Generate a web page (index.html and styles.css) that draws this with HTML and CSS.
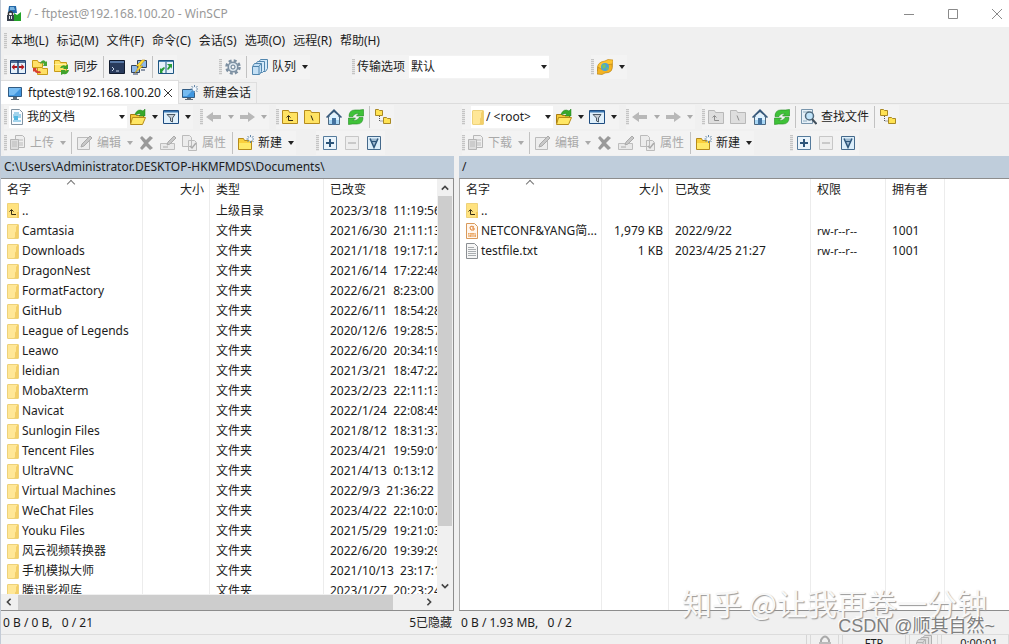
FILE: index.html
```html
<!DOCTYPE html>
<html lang="zh-CN">
<head>
<meta charset="utf-8">
<title>/ - ftptest@192.168.100.20 - WinSCP</title>
<link rel="stylesheet" href="styles.css">
</head>
<body>
<svg class="sprite" aria-hidden="true">
  <symbol id="app" viewBox="0 0 16 16"><path d="M3 0h7l1 7H2z" fill="#2468a8"/><path d="M4 1h4l1 3H4z" fill="#79b4e0"/><path d="M8 7l3 2 4-3v9H8z" fill="#23a329"/><path d="M2.500 9V7q2-3 4 0v2" fill="none" stroke="#333" stroke-width="1.500"/><path d="M1 9h7v6H1z" fill="#39414d"/><path d="M3 10h1v3H3zm2 0h1v3H5z" fill="#e4e7ec"/></symbol>
  <symbol id="compare" viewBox="0 0 16 16"><path d="M.5 1.500h15v13H.5z" fill="#e5f1fb" stroke="#1f4173"/><path d="M1 3h14M8 1v14" stroke="#1f4173" stroke-width="1.500"/><path d="M1.500 8l3-3v2H7v2H4.500v2zM14.500 8l-3-3v2H9v2h2.500v2z" fill="#b3171b"/></symbol>
  <symbol id="syncdirs" viewBox="0 0 16 16"><path d="M.5 1.500h5l1 2h4v5H.5zM5.500 8.500h4l1 1h5v6h-10z" fill="#ffe066" stroke="#c89b18"/><path d="M8 4q3-5 6-1l1-1v5h-4l1-2q-2-2-3 0z" fill="#49a536"/><path d="M1 9h4l-1 1q1 3 4 2l1 2q-5 1-7-2l-1 1z" fill="#d8402f"/></symbol>
  <symbol id="sync" viewBox="0 0 16 16"><path d="M.5 1.500h5l1 2h6v9H.5z" fill="#ffe263" stroke="#c89b18"/><path d="M.5 5.500h12" stroke="#fff1a0"/><path d="M6 9q2-4 6-2l2-2v5H9l1-1q-1-1-2 0zM15 11q-1 5-6 4l-2 1v-5h5l-1 1q1 1 2-1z" fill="#3fa22c"/></symbol>
  <symbol id="terminal" viewBox="0 0 16 16"><path d="M.5 1.500h15v13H.5z" fill="#293b5c" stroke="#111b2e"/><path d="M1 2h14v2H1z" fill="#5878a5"/><path d="M3 8l2 2-2 2M7 12h3" fill="none" stroke="#c9d6e8"/></symbol>
  <symbol id="putty" viewBox="0 0 16 16"><path d="M6.500 1.500h9v7h-9zM.5 6.500h8v7h-8z" fill="#8db8ea" stroke="#35465e"/><path d="M10 10h4v2h-4zM2 14h5v2H2z" fill="#8c97a8"/><path d="M11 1L5 7h3l-4 7 8-7H9l5-6z" fill="#ffdf39" stroke="#b58b12" stroke-width=".6"/></symbol>
  <symbol id="newwin" viewBox="0 0 16 16"><path d="M.5 1.500h15v13H.5z" fill="#e7f2fb" stroke="#1d5581"/><path d="M1 2h14v1H1z" fill="#4b86b4"/><path d="M8 3v12" stroke="#1d5581"/><path d="M9 5h5v5l-1-2-3 3-1-1 2-3zM2 9l1 1 3-2 1 1-3 4 1 1H2z" fill="#279c39"/></symbol>
  <symbol id="gear" viewBox="0 0 16 16"><circle cx="8" cy="8" r="6.500" fill="none" stroke="#7d90a2" stroke-width="2.500" stroke-dasharray="2.900 2.200"/><circle cx="8" cy="8" r="4.800" fill="#dbe5ed" stroke="#7d90a2" stroke-width="1.500"/><circle cx="8" cy="8" r="2" fill="#f5f5f5" stroke="#62798f"/></symbol>
  <symbol id="queue" viewBox="0 0 16 16"><path d="M6.500 3.500l2-3h7v9l-2 3h-7z" fill="#d5eafa" stroke="#5286ae"/><path d="M3.500 5.500l2-3h7v9l-2 2h-7z" fill="#d5eafa" stroke="#5286ae"/><path d="M.5 7.500l2-3h7v8l-2 3h-7z" fill="#c4e0f5" stroke="#5286ae"/><path d="M1 7.500h6v8M7 7.500l2-3" fill="none" stroke="#5286ae"/></symbol>
  <symbol id="auto" viewBox="0 0 16 16"><path d="M.5 12Q-1 3 8 2l3-1.500 5 .5-1 7-3-2q-5-1-7 4z" fill="#ffc52f" stroke="#c58b19" stroke-width=".7"/><path d="M15 5q2 9-7 9l-3 1.500-5-.5 1-7 3 2q5 2 6-4z" fill="#f4b321" stroke="#b9861e" stroke-width=".7"/><circle cx="8" cy="8" r="4" fill="#4ba3d8"/><path d="M5 6l3-1 1 3-3 2zM9 9l3-1-2 3z" fill="#78c464"/></symbol>
  <symbol id="monitor" viewBox="0 0 16 16"><path d="M1.500 2.500h13v9h-13z" fill="#4095df" stroke="#315b82"/><path d="M2 3h12l-7 7H2z" fill="#78bdf3"/><path d="M6 12h4v2h2v1H4v-1h2z" fill="#5f6c79"/></symbol>
  <symbol id="newsession" viewBox="0 0 16 16"><path d="M.5 4.500h12v8H.5z" fill="#3f96df" stroke="#315b82"/><path d="M1 5h10l-6 6H1z" fill="#75bbf1"/><path d="M5 13h4v1h2v1H3v-1h2z" fill="#5f6c79"/><path d="M12.500 0v8M8.500 4h8M9.500 1l6 6M15.500 1l-6 6" stroke="#6387aa"/><circle cx="12.500" cy="4" r="2" fill="#f3f9ff"/></symbol>
  <symbol id="docs" viewBox="0 0 16 16"><path d="M2.500.5h8l3 3v12h-11z" fill="#fafcff" stroke="#8193a2"/><path d="M5 4h5M4 6h8M4 8h8M4 12h8" stroke="#4aaad8"/><path d="M5 7h4v4H5z" fill="#53b8e1"/></symbol>
  <symbol id="open" viewBox="0 0 16 16"><path d="M.5 14.500v-9h5l1 1h7v3" fill="#f5c937" stroke="#a97c13"/><path d="M.5 15.500l2-7h13l-3 7z" fill="#ffe765" stroke="#b58b19"/><path d="M5 5q3-6 8-3l2-2v7H9l2-2q-3-1-5 1z" fill="#37a82b" stroke="#1f7e1c" stroke-width=".5"/></symbol>
  <symbol id="filter" viewBox="0 0 16 16"><path d="M.5 1.500h15v13H.5z" fill="#e0f0fb" stroke="#1e4c80"/><path d="M1 2h14v1.500H1z" fill="#3976b1"/><path d="M4 5.500h8L9.500 9v4l-2-1V9z" fill="#c6ced5" stroke="#4b5864"/></symbol>
  <symbol id="back" viewBox="0 0 16 16"><path d="M0 8l7-5v3h8v4H7v3z" fill="#b8b8b8"/></symbol>
  <symbol id="forward" viewBox="0 0 16 16"><path d="M16 8L9 3v3H1v4h8v3z" fill="#b8b8b8"/></symbol>
  <symbol id="parent" viewBox="0 0 16 16"><path d="M.5 14.500v-13h6l1 2h8v11z" fill="#ffe363" stroke="#b58b1c"/><path d="M6.500 7v4.500H11M4.500 8.500l2-2 2 2" fill="none" stroke="#332b16"/></symbol>
  <symbol id="root" viewBox="0 0 16 16"><path d="M.5 14.500v-13h6l1 2h8v11z" fill="#ffe363" stroke="#b58b1c"/><path d="M7 6.500l2 5" stroke="#332b16"/></symbol>
  <symbol id="home" viewBox="0 0 16 16"><path d="M2.500 7.500h11v8h-11z" fill="#a9d7f5" stroke="#4e6980"/><path d="M0 8l8-8 8 8-1 1-7-6-7 6z" fill="#36597c"/><path d="M3 8l5-4 5 4v3H3z" fill="#dff2ff"/><path d="M6 9h4v7H6z" fill="#4473a0"/></symbol>
  <symbol id="refresh" viewBox="0 0 16 16"><path d="M1 7.500Q1 1 7 1h4.500L15.500.5V7H8.500l2.500-2.500Q6 4 5 7.500zM15 8.500Q15 15 9 15H4.500L.5 15.500V9h7L5 11.500q5 .5 6-3z" fill="#3fc238" stroke="#218b20" stroke-width=".6"/></symbol>
  <symbol id="tree" viewBox="0 0 16 16"><path d="M.5.5h3l1 1h3v5h-7zM8.500 8.500h3l1 1h3v5h-7z" fill="#ffe353" stroke="#a98924"/><path d="M4.500 7v5H8" fill="none" stroke="#555" stroke-dasharray="1 1"/></symbol>
  <symbol id="find" viewBox="0 0 16 16"><path d="M.5.5h11v14H.5z" fill="#e5f0f8" stroke="#7895ac"/><path d="M2 3h6M2 12h4" stroke="#8dacbf"/><circle cx="8.500" cy="7" r="4" fill="#c0e4fa" stroke="#506a7d" stroke-width="1.500"/><path d="M11 10l4.500 5" stroke="#42505c" stroke-width="2"/></symbol>
  <symbol id="transfer" viewBox="0 0 16 16"><path d="M5.500.5h7l2 2v10h-9z" fill="#eee" stroke="#b7b7b7"/><path d="M.5 4.500h8v10h-8z" fill="#ddd" stroke="#b5b5b5"/><path d="M2 7h5M2 9h5M2 11h5M8 5h5M9 8h4M9 10h4" stroke="#bbb"/></symbol>
  <symbol id="edit" viewBox="0 0 16 16"><path d="M.5 2.500h12v12H.5z" fill="#ededed" stroke="#bbb"/><path d="M4 12l1-3 8-8 2 2-8 8z" fill="#c8c8c8" stroke="#aaa"/></symbol>
  <symbol id="delete" viewBox="0 0 16 16"><path d="M2 3l2-2 4 4 4-4 3 2-5 5 5 5-3 2-4-4-4 4-2-2 4-5z" fill="#9a9a9a"/></symbol>
  <symbol id="rename" viewBox="0 0 16 16"><path d="M.5 8.500h14v6H.5z" fill="#e9e9e9" stroke="#bdbdbd"/><path d="M3 12h5M7 10l1-3 6-6 2 2-6 6z" fill="#c8c8c8" stroke="#aaa"/></symbol>
  <symbol id="props" viewBox="0 0 16 16"><path d="M.5.5h7l2 2v9h-9zM6.500 5.500h6l2 2v8h-8z" fill="#ececec" stroke="#bbb"/><path d="M8 11l2 2 4-5" fill="none" stroke="#aaa" stroke-width="1.500"/></symbol>
  <symbol id="newdir" viewBox="0 0 16 16"><path d="M.5 14.500v-11h5l1 2h7v9z" fill="#f9cf3d" stroke="#b58b1c"/><path d="M1 8h12v6H1z" fill="#ffe969"/><path d="M12.500 0v8M8.500 4h8M9.500 1l6 6M15.500 1l-6 6" stroke="#6387aa"/><circle cx="12.500" cy="4" r="2" fill="#f3f9ff"/></symbol>
  <symbol id="plus" viewBox="0 0 16 16"><path d="M1.500 1.500h13v13h-13z" fill="#eaf4fb" stroke="#557b9c"/><path d="M4 8h8M8 4v8" stroke="#2c557a" stroke-width="2"/></symbol>
  <symbol id="minus" viewBox="0 0 16 16"><path d="M1.500 1.500h13v13h-13z" fill="#eee" stroke="#c7c7c7"/><path d="M4 8h8" stroke="#bcbcbc" stroke-width="1.500"/></symbol>
  <symbol id="invert" viewBox="0 0 16 16"><path d="M1.500 1.500h13v13h-13z" fill="#dceefa" stroke="#44698b"/><path d="M4 3.500l4 9 4-9" fill="#9db9d0" stroke="#2c557a" stroke-width="1.500"/><path d="M5.500 6.500h5" stroke="#2c557a"/></symbol>
  <symbol id="lock" viewBox="0 0 16 16"><path d="M4 8V5q4-7 8 0v3" fill="none" stroke="#aaa" stroke-width="2"/><path d="M2 7h12v8H2z" fill="#bbb"/></symbol>
  <symbol id="updir" viewBox="0 0 12 16"><path d="M.5.5h11v14H.5z" fill="#ffe27f" stroke="#eed27a"/><path d="M10 9h2v6h-2z" fill="#f0c75c"/><path d="M4.500 7v4.500H9M2.500 8.500l2-2 2 2" fill="none" stroke="#3a3018"/></symbol>
  <symbol id="pdf" viewBox="0 0 12 16"><path d="M.5.5h8l3 3v12H.5z" fill="#fff6ed" stroke="#d99a5b"/><path d="M8 4q-4-2-4 1t4 2V5H6" fill="none" stroke="#e08130"/><path d="M2 10h8v4H2z" fill="#eda965"/><path d="M3 14v-3h1v1M6 11v3M8 14v-3h2" fill="none" stroke="#fff" stroke-width=".6"/></symbol>
  <symbol id="text" viewBox="0 0 12 16"><path d="M.5.5h8l3 3v12H.5z" fill="#f6f6f6" stroke="#8b8f93"/><path d="M2 4.500h6M2 6.500h8M2 8.500h8M2 10.500h8M2 12.500h8" stroke="#a9adb0"/></symbol>
</svg>

<div class="app">
  <header class="titlebar">
    <svg class="icon"><use href="#app"/></svg>
    <h1>/ - ftptest@192.168.100.20 - WinSCP</h1>
    <div class="window-buttons">
      <button aria-label="最小化"><svg class="wicon" viewBox="0 0 12 12"><path d="M1 6.500h10"/></svg></button>
      <button aria-label="最大化"><svg class="wicon" viewBox="0 0 12 12"><path d="M1.500 1.500h9v9h-9z"/></svg></button>
      <button aria-label="关闭"><svg class="wicon" viewBox="0 0 12 12"><path d="M1 1l10 10M11 1L1 11"/></svg></button>
    </div>
  </header>

  <nav class="menubar">
    <span class="grip"></span>
    <button>本地(L)</button><button>标记(M)</button><button>文件(F)</button><button>命令(C)</button><button>会话(S)</button><button>选项(O)</button><button>远程(R)</button><button>帮助(H)</button>
  </nav>

  <div class="toolbar main-tools">
    <div class="group">
      <span class="grip"></span>
      <button aria-label="比较目录"><svg class="icon"><use href="#compare"/></svg></button>
      <button aria-label="同步浏览"><svg class="icon"><use href="#syncdirs"/></svg></button>
      <button><svg class="icon"><use href="#sync"/></svg>同步</button>
      <span class="sep"></span>
      <button aria-label="终端"><svg class="icon"><use href="#terminal"/></svg></button>
      <button aria-label="PuTTY"><svg class="icon"><use href="#putty"/></svg></button>
      <span class="sep"></span>
      <button aria-label="新窗口"><svg class="icon"><use href="#newwin"/></svg></button>
    </div>
    <div class="group">
      <span class="grip"></span>
      <button aria-label="选项"><svg class="icon"><use href="#gear"/></svg></button>
      <span class="sep"></span>
      <button><svg class="icon"><use href="#queue"/></svg>队列</button><button class="caret" aria-label="队列菜单"></button>
    </div>
    <div class="group">
      <span class="grip"></span>
      <label for="preset">传输选项</label>
      <div class="combo preset"><select id="preset"><option>默认</option></select><span class="caret"></span></div>
    </div>
    <div class="group last">
      <span class="grip"></span>
      <button aria-label="自动"><svg class="icon"><use href="#auto"/></svg></button><button class="caret" aria-label="自动菜单"></button>
    </div>
  </div>

  <div class="tabs">
    <button class="tab active"><svg class="icon"><use href="#monitor"/></svg>ftptest@192.168.100.20<svg class="close" viewBox="0 0 8 8"><path d="M0 0l8 8M8 0L0 8"/></svg></button>
    <button class="tab"><svg class="icon"><use href="#newsession"/></svg>新建会话</button>
  </div>

  <main class="panes">
    <section class="pane local">
      <div class="toolbar">
        <div class="group">
          <span class="grip"></span>
          <div class="combo drive"><svg class="icon"><use href="#docs"/></svg><select aria-label="本地目录"><option>我的文档</option></select><span class="caret"></span></div>
          <button aria-label="打开目录"><svg class="icon"><use href="#open"/></svg></button><button class="caret" aria-label="打开菜单"></button>
          <button aria-label="过滤"><svg class="icon"><use href="#filter"/></svg></button><button class="caret" aria-label="过滤菜单"></button>
        </div>
        <div class="group near">
          <span class="grip"></span>
          <button disabled aria-label="后退"><svg class="icon"><use href="#back"/></svg></button><button class="caret" disabled aria-label="后退菜单"></button>
          <button disabled aria-label="前进"><svg class="icon"><use href="#forward"/></svg></button><button class="caret" disabled aria-label="前进菜单"></button>
        </div>
        <div class="group near">
          <span class="grip"></span>
          <button aria-label="上级目录"><svg class="icon"><use href="#parent"/></svg></button>
          <button aria-label="根目录"><svg class="icon"><use href="#root"/></svg></button>
          <button aria-label="主目录"><svg class="icon"><use href="#home"/></svg></button>
          <button aria-label="刷新"><svg class="icon"><use href="#refresh"/></svg></button>
          <span class="sep"></span>
          <button aria-label="目录树"><svg class="icon"><use href="#tree"/></svg></button>
        </div>
      </div>
      <div class="toolbar file-tools">
        <div class="group">
          <span class="grip"></span>
          <button disabled><svg class="icon"><use href="#transfer"/></svg>上传</button><button class="caret" disabled aria-label="上传菜单"></button>
          <span class="sep"></span>
          <button disabled><svg class="icon"><use href="#edit"/></svg>编辑</button><button class="caret" disabled aria-label="编辑菜单"></button>
          <button disabled aria-label="删除"><svg class="icon"><use href="#delete"/></svg></button>
          <button disabled aria-label="重命名"><svg class="icon"><use href="#rename"/></svg></button>
          <button disabled><svg class="icon"><use href="#props"/></svg>属性</button>
          <span class="sep"></span>
          <button><svg class="icon"><use href="#newdir"/></svg>新建</button><button class="caret" aria-label="新建菜单"></button>
        </div>
        <div class="group select-tools">
          <span class="grip"></span>
          <button aria-label="选择"><svg class="icon"><use href="#plus"/></svg></button>
          <button disabled aria-label="取消选择"><svg class="icon"><use href="#minus"/></svg></button>
          <button aria-label="反选"><svg class="icon"><use href="#invert"/></svg></button>
        </div>
      </div>
      <div class="path">C:\Users\Administrator.DESKTOP-HKMFMDS\Documents\</div>
      <div class="listing">
        <div class="scroll-y"><svg viewBox="0 0 10 6"><path d="M1 5l4-4 4 4"/></svg><span class="thumb"></span><svg viewBox="0 0 10 6"><path d="M1 1l4 4 4-4"/></svg></div>
        <div class="files">
          <table>
            <colgroup><col class="c-name"><col class="c-size"><col class="c-type"><col></colgroup>
            <thead><tr><th class="sorted">名字</th><th class="num">大小</th><th>类型</th><th>已改变</th></tr></thead>
            <tbody>
              <tr><td><svg class="ficon"><use href="#updir"/></svg>..</td><td></td><td>上级目录</td><td>2023/3/18&nbsp; 11:19:56</td></tr>
              <tr><td class="dir">Camtasia</td><td></td><td>文件夹</td><td>2021/6/30&nbsp; 21:11:13</td></tr>
              <tr><td class="dir">Downloads</td><td></td><td>文件夹</td><td>2021/1/18&nbsp; 19:17:12</td></tr>
              <tr><td class="dir">DragonNest</td><td></td><td>文件夹</td><td>2021/6/14&nbsp; 17:22:48</td></tr>
              <tr><td class="dir">FormatFactory</td><td></td><td>文件夹</td><td>2022/6/21&nbsp; 8:23:00</td></tr>
              <tr><td class="dir">GitHub</td><td></td><td>文件夹</td><td>2022/6/11&nbsp; 18:54:28</td></tr>
              <tr><td class="dir">League of Legends</td><td></td><td>文件夹</td><td>2020/12/6&nbsp; 19:28:57</td></tr>
              <tr><td class="dir">Leawo</td><td></td><td>文件夹</td><td>2022/6/20&nbsp; 20:34:19</td></tr>
              <tr><td class="dir">leidian</td><td></td><td>文件夹</td><td>2021/3/21&nbsp; 18:47:22</td></tr>
              <tr><td class="dir">MobaXterm</td><td></td><td>文件夹</td><td>2023/2/23&nbsp; 22:11:13</td></tr>
              <tr><td class="dir">Navicat</td><td></td><td>文件夹</td><td>2022/1/24&nbsp; 22:08:45</td></tr>
              <tr><td class="dir">Sunlogin Files</td><td></td><td>文件夹</td><td>2021/8/12&nbsp; 18:31:37</td></tr>
              <tr><td class="dir">Tencent Files</td><td></td><td>文件夹</td><td>2023/4/21&nbsp; 19:59:01</td></tr>
              <tr><td class="dir">UltraVNC</td><td></td><td>文件夹</td><td>2021/4/13&nbsp; 0:13:12</td></tr>
              <tr><td class="dir">Virtual Machines</td><td></td><td>文件夹</td><td>2022/9/3&nbsp; 21:36:22</td></tr>
              <tr><td class="dir">WeChat Files</td><td></td><td>文件夹</td><td>2023/4/22&nbsp; 22:10:07</td></tr>
              <tr><td class="dir">Youku Files</td><td></td><td>文件夹</td><td>2021/5/29&nbsp; 19:21:03</td></tr>
              <tr><td class="dir">风云视频转换器</td><td></td><td>文件夹</td><td>2022/6/20&nbsp; 19:39:29</td></tr>
              <tr><td class="dir">手机模拟大师</td><td></td><td>文件夹</td><td>2021/10/13&nbsp; 23:17:15</td></tr>
              <tr><td class="dir">腾讯影视库</td><td></td><td>文件夹</td><td>2023/1/27&nbsp; 20:23:24</td></tr>
            </tbody>
          </table>
          <div class="lines"><i class="c-name"></i><i class="c-size"></i><i class="c-type"></i></div>
        </div>
        <div class="scroll-x"><svg viewBox="0 0 6 10"><path d="M5 1L1 5l4 4"/></svg><span class="thumb"></span><svg viewBox="0 0 6 10"><path d="M1 1l4 4-4 4"/></svg></div>
      </div>
      <div class="status"><span>0 B / 0 B,&nbsp;&nbsp; 0 / 21</span><span>5已隐藏</span></div>
    </section>

    <section class="pane remote">
      <div class="toolbar">
        <div class="group">
          <span class="grip"></span>
          <div class="combo drive"><span class="folder"></span><select aria-label="远程目录"><option>/ &lt;root&gt;</option></select><span class="caret"></span></div>
          <button aria-label="打开目录"><svg class="icon"><use href="#open"/></svg></button><button class="caret" aria-label="打开菜单"></button>
          <button aria-label="过滤"><svg class="icon"><use href="#filter"/></svg></button><button class="caret" aria-label="过滤菜单"></button>
        </div>
        <div class="group near">
          <span class="grip"></span>
          <button disabled aria-label="后退"><svg class="icon"><use href="#back"/></svg></button><button class="caret" disabled aria-label="后退菜单"></button>
          <button disabled aria-label="前进"><svg class="icon"><use href="#forward"/></svg></button><button class="caret" disabled aria-label="前进菜单"></button>
        </div>
        <div class="group near">
          <span class="grip"></span>
          <button disabled class="gray" aria-label="上级目录"><svg class="icon"><use href="#parent"/></svg></button>
          <button disabled class="gray" aria-label="根目录"><svg class="icon"><use href="#root"/></svg></button>
          <button aria-label="主目录"><svg class="icon"><use href="#home"/></svg></button>
          <button aria-label="刷新"><svg class="icon"><use href="#refresh"/></svg></button>
          <span class="sep"></span>
          <button><svg class="icon"><use href="#find"/></svg>查找文件</button>
          <span class="sep"></span>
          <button aria-label="目录树"><svg class="icon"><use href="#tree"/></svg></button>
        </div>
      </div>
      <div class="toolbar file-tools">
        <div class="group">
          <span class="grip"></span>
          <button disabled><svg class="icon"><use href="#transfer"/></svg>下载</button><button class="caret" disabled aria-label="下载菜单"></button>
          <span class="sep"></span>
          <button disabled><svg class="icon"><use href="#edit"/></svg>编辑</button><button class="caret" disabled aria-label="编辑菜单"></button>
          <button disabled aria-label="删除"><svg class="icon"><use href="#delete"/></svg></button>
          <button disabled aria-label="重命名"><svg class="icon"><use href="#rename"/></svg></button>
          <button disabled><svg class="icon"><use href="#props"/></svg>属性</button>
          <span class="sep"></span>
          <button><svg class="icon"><use href="#newdir"/></svg>新建</button><button class="caret" aria-label="新建菜单"></button>
        </div>
        <div class="group select-tools">
          <span class="grip"></span>
          <button aria-label="选择"><svg class="icon"><use href="#plus"/></svg></button>
          <button disabled aria-label="取消选择"><svg class="icon"><use href="#minus"/></svg></button>
          <button aria-label="反选"><svg class="icon"><use href="#invert"/></svg></button>
        </div>
      </div>
      <div class="path">/</div>
      <div class="listing">
        <div class="files">
          <table>
            <colgroup><col class="c-name"><col class="c-size"><col class="c-date"><col class="c-perm"><col class="c-owner"><col></colgroup>
            <thead><tr><th class="sorted">名字</th><th class="num">大小</th><th>已改变</th><th>权限</th><th>拥有者</th><th></th></tr></thead>
            <tbody>
              <tr><td><svg class="ficon"><use href="#updir"/></svg>..</td><td></td><td></td><td></td><td></td><td></td></tr>
              <tr><td><svg class="ficon"><use href="#pdf"/></svg>NETCONF&amp;YANG简...</td><td class="num">1,979 KB</td><td>2022/9/22</td><td class="perm">rw-r--r--</td><td>1001</td><td></td></tr>
              <tr><td><svg class="ficon"><use href="#text"/></svg>testfile.txt</td><td class="num">1 KB</td><td>2023/4/25 21:27</td><td class="perm">rw-r--r--</td><td>1001</td><td></td></tr>
            </tbody>
          </table>
          <div class="lines"><i class="c-name"></i><i class="c-size"></i><i class="c-date"></i><i class="c-perm"></i><i class="c-owner"></i></div>
        </div>
      </div>
      <div class="status"><span>0 B / 1.93 MB,&nbsp;&nbsp; 0 / 2</span></div>
    </section>
  </main>

  <footer class="session">
    <span class="hint"></span>
    <span class="cell"><svg class="icon"><use href="#lock"/></svg></span>
    <span class="cell wide">FTP</span>
    <span class="cell"><svg class="icon gray"><use href="#queue"/></svg></span>
    <span class="cell time">0:00:01</span>
  </footer>
</div>
<div class="mark mark-large">知乎 @让我再卷一分钟</div>
<div class="mark mark-small">CSDN @顺其自然~</div>
</body>
</html>
```
FILE: styles.css
```css
*, ::before, ::after { box-sizing: border-box; }

body {
  margin: 0;
  height: 100vh;
  overflow: hidden;
  position: relative;
  background: #f0f0f0;
  color: #1c1c1c;
  font: 12px/16px "Noto Sans", "Noto Sans CJK SC", sans-serif;
}

.sprite { display: none; }

button, select {
  margin: 0;
  padding: 0;
  border: 0;
  background: none;
  color: inherit;
  font: inherit;
  white-space: nowrap;
}

/* The session bar runs past the bottom edge of the window. */
.app {
  display: flex;
  flex-direction: column;
  height: calc(100vh + 11px);
  border-left: 1px solid #c3cbd6;
}

.icon { width: 16px; height: 16px; flex: none; display: block; }

/* Title bar */
.titlebar {
  display: flex;
  align-items: center;
  flex: none;
  height: 27px;
  padding-left: 5px;
  background: #fff;
}
.titlebar h1 {
  flex: 1;
  margin: 0 0 0 5px;
  font-size: 12px;
  font-weight: 400;
  color: #999;
}
.window-buttons { display: flex; }
.window-buttons button {
  width: 44px;
  height: 26px;
  display: flex;
  align-items: center;
  justify-content: center;
}
.window-buttons button:last-child { width: 34px; padding-left: 10px; }
.wicon { width: 12px; height: 12px; fill: none; stroke: #8a8a8a; }

/* Menu and toolbars */
.menubar {
  display: flex;
  align-items: center;
  flex: none;
  height: 27px;
  padding-left: 3px;
  gap: 8px;
}
.menubar .grip { margin-right: -4px; }

.grip {
  flex: none;
  width: 3px;
  height: 16px;
  background: repeating-linear-gradient(#c4c4c4 0 1px, #e6e6e6 1px 2px);
}

.toolbar {
  display: flex;
  align-items: center;
  flex: none;
  height: 26px;
  padding-left: 3px;
}
.group { display: flex; align-items: center; height: 24px; background: #f3f3f3; }
.group + .group { margin-left: 42px; }
.group + .near { margin-left: 7px; }
.group + .select-tools { margin-left: 20px; }
.remote .group + .select-tools { margin-left: 36px; }

.group button {
  display: flex;
  align-items: center;
  gap: 4px;
  height: 22px;
  padding: 0 3px;
}
.group button:disabled { color: #a9a9a9; }
.gray { filter: grayscale(1) brightness(0.9) opacity(0.5); }

.group .caret, .combo .caret {
  flex: none;
  display: flex;
  align-items: center;
  justify-content: center;
  width: 11px;
  padding: 0;
  height: 22px;
}
.caret::after {
  content: "";
  border: 3px solid transparent;
  border-top: 4px solid #222;
  border-bottom: 0;
}
.caret:disabled::after { border-top-color: #aaa; }

.sep { flex: none; width: 1px; height: 22px; margin: 0 2px; background: #c2c2c2; }
.file-tools .sep { margin-left: 3px; }

.group label { padding: 0 4px 0 2px; }
.combo { display: flex; align-items: center; height: 22px; background: #fff; }
.combo select { flex: 1; min-width: 0; appearance: none; outline: 0; padding-left: 2px; }
.preset { width: 140px; }
.local .drive { width: 118px; margin-left: 2px; }
.remote .drive { width: 82px; margin-left: 6px; }
.drive .folder { margin-left: 1px; }

.folder, .dir::before {
  content: "";
  flex: none;
  width: 12px;
  height: 15px;
  border: 1px solid #eed27a;
  border-radius: 1px;
  background: linear-gradient(100deg, #ffe797 70%, #f3cf69 72%);
}

/* Session tabs */
.tabs { display: flex; flex: none; height: 24px; border-bottom: 1px solid #dcdcdc; }
.tab {
  display: flex;
  align-items: center;
  gap: 5px;
  margin-top: 2px;
  padding: 0 5px 0 3px;
  border: 1px solid #dedede;
  border-left: 0;
  border-bottom: 0;
}
.tab.active { margin: 0 0 -1px; padding: 0 6px 0 6px; background: #fff; }
.tab.active .close { margin-left: -2px; }
.close { width: 8px; height: 8px; fill: none; stroke: #333; }

/* File panes */
.panes {
  flex: 1;
  min-height: 0;
  display: grid;
  grid-template-columns: 453fr 550fr;
  gap: 5px;
}
.pane { display: flex; flex-direction: column; min-width: 0; min-height: 0; }
.path {
  flex: none;
  height: 22px;
  padding: 3px;
  background: #bfcddb;
  white-space: nowrap;
  overflow: hidden;
}
.listing {
  flex: 1;
  min-height: 0;
  display: grid;
  grid-template: 1fr 16px / 1fr 16px;
  border: 1px solid #8d8d8d;
  border-left-color: #aaa;
  background: #fff;
}
.local .listing { border-left: 0; }
.remote .listing { grid-template: 1fr / 1fr; border-right: 0; }
.files { position: relative; min-width: 0; overflow: hidden; grid-area: 1 / 1; }

table { width: 100%; table-layout: fixed; border-collapse: collapse; }
col.c-name, i.c-name { width: 142px; }
col.c-size, i.c-size { width: 67px; }
col.c-type, i.c-type { width: 114px; }
col.c-date, i.c-date { width: 142px; }
col.c-perm, i.c-perm { width: 75px; }
col.c-owner, i.c-owner { width: 59px; }
th, td { padding: 0 6px; text-align: left; white-space: nowrap; overflow: hidden; }
th { height: 22px; font-weight: 400; }
td { height: 20px; }
td:last-child { padding-right: 0; }
td:first-child { display: flex; align-items: center; gap: 3px; padding: 0 0 0 6px; }
.perm { font-size: 11px; }
.num { text-align: right; }
.ficon { width: 12px; height: 16px; flex: none; }
.sorted { position: relative; }
.sorted::after {
  content: "";
  position: absolute;
  top: 2px;
  left: 50%;
  width: 6px;
  height: 6px;
  margin-left: -4px;
  border: solid #777;
  border-width: 1px 0 0 1px;
  transform: rotate(45deg);
}
.lines { position: absolute; inset: 0; display: flex; pointer-events: none; }
.lines i { flex: none; border-right: 1px solid #ececec; }

/* Scroll bars */
.scroll-y, .scroll-x { display: flex; align-items: center; background: #f0f0f0; }
.scroll-y { grid-area: 1 / 2; flex-direction: column; padding: 6px 0 5px; gap: 5px; }
.scroll-x { grid-area: 2 / 1 / 3 / 3; padding: 0 21px 0 5px; gap: 6px; }
.scroll-y svg { width: 8px; height: 6px; }
.scroll-x svg { width: 6px; height: 8px; }
.scroll-y svg, .scroll-x svg { flex: none; fill: none; stroke: #444; stroke-width: 2; }
.scroll-y .thumb { width: 14px; height: 330px; max-height: 88%; margin-bottom: auto; background: #cdcdcd; }
.scroll-x .thumb { width: 88%; height: 15px; margin-right: auto; background: #cdcdcd; }

/* Status bars */
.status {
  display: flex;
  justify-content: space-between;
  flex: none;
  height: 23px;
  padding: 4px 2px;
}
.session {
  display: flex;
  gap: 3px;
  flex: none;
  height: 21px;
  border-top: 1px solid #dcdcdc;
  font-size: 11px;
}
.hint { flex: 1; border-right: 1px solid #d5d5d5; }
.cell {
  display: flex;
  justify-content: center;
  width: 29px;
  border: 1px solid #d9d9d9;
  border-width: 0 1px;
}
.cell.wide { width: 64px; }
.cell.time { width: 68px; padding-left: 8px; }

/* Overlaid marks */
.mark { position: absolute; white-space: nowrap; pointer-events: none; }
.mark-large {
  right: 22px;
  bottom: 22px;
  font: 30px/40px "Noto Sans CJK SC", sans-serif;
  color: #f8f8f8;
  text-shadow: 1px 1px 1px #999;
}
.mark-small {
  right: 14px;
  bottom: 6px;
  font: 18px/24px "Liberation Sans", "Noto Sans CJK SC", sans-serif;
  color: #808080;
  text-shadow: -1px -1px 0 #fff;
}
```
